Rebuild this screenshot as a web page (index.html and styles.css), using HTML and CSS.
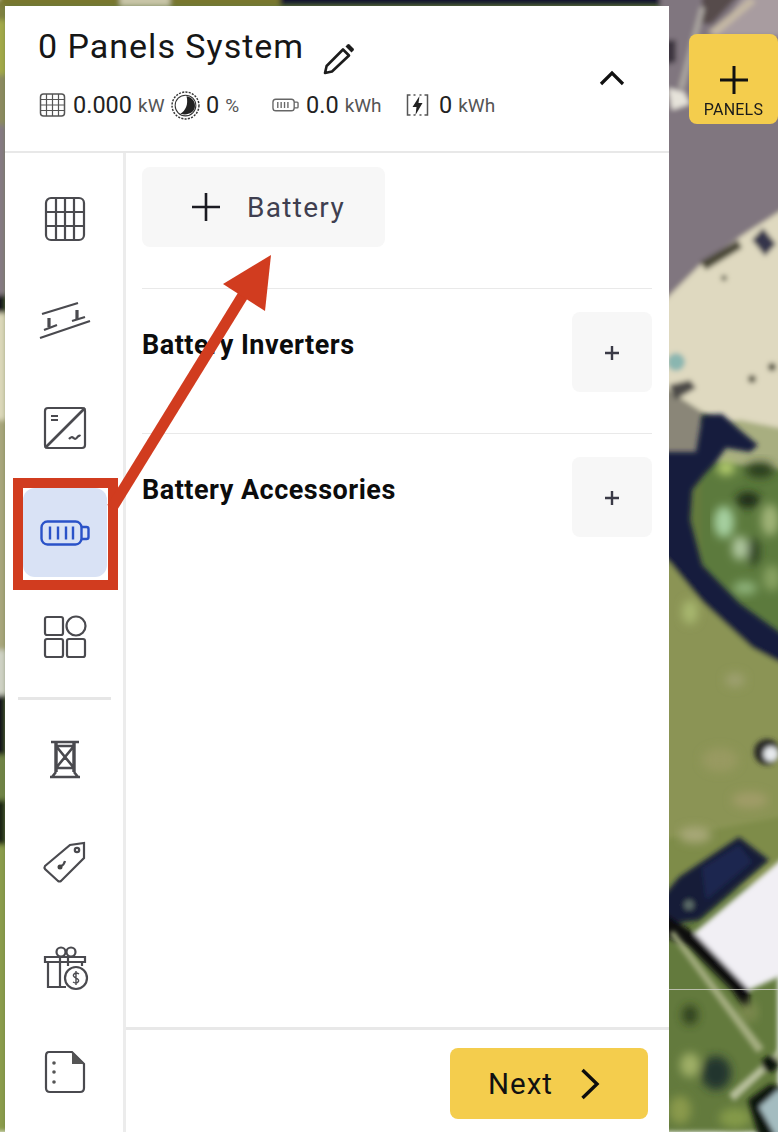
FILE: index.html
```html
<!DOCTYPE html>
<html lang="en">
<head>
<meta charset="utf-8">
<title>0 Panels System</title>
<link rel="stylesheet" href="styles.css">
</head>
<body>
<div class="stage">
  <svg class="map" viewBox="0 0 778 1132" preserveAspectRatio="none" aria-hidden="true">
    <defs>
      <filter id="soft" x="-5%" y="-5%" width="110%" height="110%"><feGaussianBlur stdDeviation="2.600"/></filter>
      <filter id="softer" x="-5%" y="-5%" width="110%" height="110%"><feGaussianBlur stdDeviation="5"/></filter>
    </defs>
    <g filter="url(#soft)">
      <rect width="778" height="1132" fill="#647a3c"/>
      <rect x="-10" y="0" width="16" height="20" fill="#7f8040"/>
      <rect x="-10" y="20" width="16" height="55" fill="#a3a94a"/>
      <rect x="-10" y="75" width="16" height="50" fill="#8c8a60"/>
      <rect x="-10" y="125" width="16" height="170" fill="#857a82"/>
      <rect x="-10" y="295" width="16" height="18" fill="#15131c"/>
      <rect x="-10" y="313" width="16" height="107" fill="#dcd8ba"/>
      <rect x="-10" y="420" width="16" height="230" fill="#a8a67c"/>
      <rect x="-10" y="650" width="16" height="45" fill="#cfd2c4"/>
      <rect x="-10" y="695" width="16" height="60" fill="#15181c"/>
      <rect x="-10" y="755" width="16" height="45" fill="#6f8345"/>
      <rect x="-10" y="800" width="16" height="45" fill="#1c2612"/>
      <rect x="-10" y="845" width="16" height="287" fill="#8b9c4c"/>
      <rect x="0" y="-6" width="360" height="12" fill="#79772f"/>
      <rect x="120" y="-6" width="50" height="12" fill="#c9c6a8"/>
      <rect x="280" y="-6" width="400" height="12" fill="#14172e"/>

      <rect x="660" y="-6" width="128" height="330" fill="#80767f"/>
      <polygon points="702,-6 740,-6 712,24 702,24" fill="#564b4c"/>
      <polygon points="745,-6 790,-6 790,36 715,36" fill="#a89ca0"/>
      <polygon points="708,32 750,-2 756,2 716,36" fill="#c4b8a4"/>
      <polygon points="700,6 705,8 684,90 678,88" fill="#aaa5a0"/>
      <polygon points="668,88 684,92 690,104 672,110" fill="#e6e3da"/>
      <polygon points="660,40 676,40 676,62 660,66" fill="#3c3640"/>
      <polygon points="660,305 702,263 746,233 790,205 790,445 740,430 702,412 660,385" fill="#dfd9c0"/>
      <polygon points="700,262 738,240 742,248 706,270" fill="#4c4a38"/>
      <polygon points="752,240 763,228 776,244 765,256" fill="#35344c"/>
      <circle cx="724" cy="278" r="3" fill="#6b6a56"/>
      <circle cx="676" cy="362" r="9" fill="#8ab6b0"/>
      <circle cx="772" cy="367" r="4" fill="#4b4a38"/>
      <circle cx="752" cy="379" r="4" fill="#5b5a48"/>
      <polygon points="660,385 702,412 702,460 660,460" fill="#8a8678"/>
      <polygon points="669,385 690,380 696,388 675,400" fill="#4e4c48"/>
      <rect x="702" y="430" width="88" height="210" fill="#5c7a3e"/>
      <polygon points="790,430 740,420 702,425 702,460 790,470" fill="#a8ae80"/>
    </g>
    <g filter="url(#softer)">
      <ellipse cx="726" cy="468" rx="9" ry="7" fill="#b8d070"/>
      <ellipse cx="748" cy="500" rx="12" ry="8" fill="#1e2c14"/>
      <ellipse cx="724" cy="522" rx="10" ry="16" fill="#a6d0a0"/>
      <ellipse cx="740" cy="548" rx="8" ry="12" fill="#b0c8a0"/>
      <ellipse cx="760" cy="470" rx="14" ry="8" fill="#2c3c1c"/>
      <ellipse cx="770" cy="520" rx="9" ry="16" fill="#a0b478"/>
      <ellipse cx="754" cy="552" rx="6" ry="14" fill="#2e4220"/>
      <ellipse cx="772" cy="578" rx="9" ry="13" fill="#86a060"/>
      <ellipse cx="745" cy="588" rx="12" ry="7" fill="#8cb078"/>
    </g>
    <g filter="url(#soft)">
      <polygon points="660,452 696,452 702,415 722,414 740,430 758,445 750,452 726,448 716,462 704,475 692,490 690,520 702,565 739,603 790,640 790,668 752,648 702,602 669,562 660,556" fill="#151a3c"/>
      <polygon points="660,556 669,562 702,602 752,648 790,668 790,840 660,880" fill="#8b9455"/>
      <polygon points="660,840 790,815 790,880 660,900" fill="#7e8c48"/>
    </g>
    <g filter="url(#softer)">
      <ellipse cx="690" cy="612" rx="8" ry="12" fill="#a8b870"/>
      <ellipse cx="735" cy="680" rx="10" ry="7" fill="#9ea070"/>
      <ellipse cx="720" cy="760" rx="18" ry="12" fill="#989a60"/>
      <ellipse cx="695" cy="835" rx="16" ry="8" fill="#a8a878"/>
      <ellipse cx="750" cy="800" rx="18" ry="8" fill="#a09c68"/>
    </g>
    <g filter="url(#soft)">
      <circle cx="767" cy="752" r="13" fill="#2a2c26"/>
      <circle cx="771" cy="754" r="7.500" fill="#e6e9ec"/>
      <polygon points="679,877 739,837 769,860 699,920 660,925 660,900" fill="#141a38"/>
      <polygon points="702,868 739,845 752,862 706,900" fill="#1c2850"/>
      <circle cx="689" cy="905" r="5" fill="#5c6c68"/>
      <polygon points="660,910 694,933 749,985 750,1017 732,990 689,947 660,935" fill="#0b0c10"/>
      <polygon points="694,933 790,852 790,972 749,990" fill="#f1eff4"/>
    </g>
    <g filter="url(#softer)">
      <ellipse cx="690" cy="1015" rx="8" ry="10" fill="#2e401a"/>
      <ellipse cx="690" cy="1065" rx="10" ry="12" fill="#a0b068"/>
      <ellipse cx="748" cy="1012" rx="10" ry="10" fill="#7e8c50"/>
      <ellipse cx="680" cy="1110" rx="11" ry="14" fill="#8a9a4c"/>
      <ellipse cx="735" cy="1118" rx="16" ry="10" fill="#849a48"/>
      <ellipse cx="716" cy="1073" rx="15" ry="17" fill="#22362f"/>
    </g>
    <g filter="url(#soft)">
      <polygon points="669,933 674,931 764,1048 757,1053" fill="#a4ad80"/>
      <polygon points="729,1094 790,1040 790,1049 734,1101" fill="#b8c09c"/>
      <circle cx="770" cy="1064" r="8" fill="#0e1210"/>
      <polygon points="748,1100 770,1084 790,1090 790,1140 760,1140" fill="#101410"/>
      <polygon points="778,1090 759,1107 778,1140 790,1140 790,1090" fill="#a4bcc0"/>
    </g>
    <rect x="669" y="989" width="109" height="1" fill="#cfcfc8" opacity=".8"/>
  </svg>

  <section class="panel">
    <header class="head">
      <div class="head-main">
        <div class="title-row">
          <h1 class="title">0 Panels System</h1>
          <svg class="pencil" viewBox="0 0 34 34" aria-hidden="true"><path d="M3 31l1.600-7L21 7.500 27 13.500 10 29.500z" fill="none" stroke="#1c1c1c" stroke-width="2.600" stroke-linejoin="round"/><path d="M23.500 4.500l2-2q1-1 2 0l4 4q1 1 0 2l-2 2z" fill="#1c1c1c"/></svg>
        </div>
        <div class="stats">
          <div class="stat stat-a">
            <svg class="stat-icon" viewBox="0 0 26 24" aria-hidden="true"><rect x="1" y="1" width="24" height="22" rx="3" fill="none" stroke="#555" stroke-width="1.500"/><path d="M1 6.500H25M1 12H25M1 17.500H25M7 1V23M13 1V23M19 1V23" stroke="#555" stroke-width="1.200"/></svg>
            <span class="val">0.000</span><span class="unit">kW</span>
          </div>
          <div class="stat stat-b">
            <svg class="stat-icon stat-icon-pie" viewBox="0 0 28 28" aria-hidden="true"><circle cx="14" cy="14" r="13" fill="none" stroke="#333" stroke-width="1.400" stroke-dasharray="2 1.200"/><circle cx="14" cy="14" r="10" fill="none" stroke="#333" stroke-width="1"/><path d="M15 5C21 6 24 11 23 16 22 21 16 24 9 22 14 19 17 13 15 5z" fill="#222"/></svg>
            <span class="val">0</span><span class="unit">%</span>
          </div>
          <div class="stat stat-c">
            <svg class="stat-icon" viewBox="0 0 28 16" aria-hidden="true"><rect x="1" y="2" width="22" height="12" rx="3" fill="none" stroke="#666" stroke-width="1.400"/><path d="M23 5h3q1 0 1 1v4q0 1-1 1h-3" fill="none" stroke="#666" stroke-width="1.400"/><path d="M6 5v6M9.500 5v6M13 5v6M16.500 5v6" stroke="#666" stroke-width="1.400"/></svg>
            <span class="val">0.0</span><span class="unit">kWh</span>
          </div>
          <div class="stat">
            <svg class="stat-icon stat-icon-bolt" viewBox="0 0 24 24" aria-hidden="true"><path d="M5 2H2v20h3M19 2h3v20h-3M8 2h2M14 2h2M8 22h2M14 22h2" fill="none" stroke="#555" stroke-width="1.500"/><path d="M14 3L7 14h4l-1 8 7-12h-4z" fill="#222"/></svg>
            <span class="val">0</span><span class="unit">kWh</span>
          </div>
        </div>
      </div>
      <svg class="caret" viewBox="0 0 26 16" aria-hidden="true"><path d="M2 14L13 3l11 11" fill="none" stroke="#111" stroke-width="3.200"/></svg>
    </header>

    <div class="body">
      <nav class="rail">
        <div class="rail-item">
          <svg class="rail-icon" viewBox="0 0 44 44" aria-hidden="true"><rect x="3" y="1" width="38" height="42" rx="5" class="ln"/><path d="M13 1V43M22 1V43M31 1V43M3 15H41M3 29H41" class="ln"/></svg>
        </div>
        <div class="rail-item">
          <svg class="rail-icon rail-icon-mount" viewBox="0 0 54 40" aria-hidden="true"><path d="M4 11L40 0M2 35L52 18M6 27L19 22M34 18L47 14" class="ln"/><path d="M11 15V24M39 7V16" class="ln ln-heavy"/></svg>
        </div>
        <div class="rail-item">
          <svg class="rail-icon" viewBox="0 0 44 44" aria-hidden="true"><rect x="2" y="2" width="40" height="40" rx="3" class="ln"/><path d="M2 42L42 2" class="ln ln-mid"/><path d="M8 10h7M8 14h7M26 33q2.500-3 4.500-1t4-1q1.500-2 3-1" class="ln"/></svg>
        </div>
        <div class="rail-item rail-item-active">
          <svg class="rail-icon-batt" viewBox="0 0 50 26" aria-hidden="true"><rect x="1.500" y="1.500" width="40" height="23" rx="6" class="ln-blue"/><path d="M41.500 7h5q2 0 2 2v8q0 2-2 2h-5" class="ln-blue"/><path d="M10 6.500v13M18 6.500v13M26 6.500v13M33 6.500v13" class="ln-blue"/></svg>
        </div>
        <div class="rail-item">
          <svg class="rail-icon" viewBox="0 0 44 44" aria-hidden="true"><rect x="2" y="2" width="18" height="18" rx="2" class="ln"/><circle cx="33" cy="11" r="9.500" class="ln"/><rect x="2" y="24" width="18" height="18" rx="2" class="ln"/><rect x="24" y="24" width="18" height="18" rx="2" class="ln"/></svg>
        </div>
        <div class="rail-rule"></div>
        <div class="rail-item">
          <svg class="rail-icon" viewBox="0 1 44 44" aria-hidden="true"><path d="M8 5H36M13 5V35M31 5V35M13 9H31M13 31H31M13 9L31 31M31 9L13 31M13 35L9 40M31 35L35 40M7 40H37" class="ln ln-mid"/><path d="M13 5V35M31 5V35" class="ln ln-heavy"/></svg>
        </div>
        <div class="rail-item">
          <svg class="rail-icon" viewBox="0 3 44 44" aria-hidden="true"><path d="M2 26L27 5 41 3 41 18 18 41q-1.500 1-3 0L2 29q-1-1.500 0-3z" class="ln"/><circle cx="34" cy="10" r="2.200" class="ln"/><path d="M22 21q-1 4-4 5" class="ln"/><circle cx="17" cy="27" r="2.500" fill="#444"/></svg>
        </div>
        <div class="rail-item">
          <svg class="rail-icon" viewBox="-1 1 44 44" aria-hidden="true"><path d="M1 11H41V16H1zM4 16V41H22M38 16V20M16 11V41M24 11V20" class="ln"/><circle cx="17" cy="6" r="4.500" class="ln"/><circle cx="27" cy="6" r="4.500" class="ln"/><circle cx="32" cy="32" r="11" class="ln"/><path d="M35 28q-3-2-5 0t2 4 2 4-5 0M32 25v14" class="ln ln-thin"/></svg>
        </div>
        <div class="rail-item">
          <svg class="rail-icon" viewBox="0 2 44 44" aria-hidden="true"><path d="M6 2H29L41 14V38q0 4-4 4H7q-4 0-4-4V6q0-4 3-4z" class="ln"/><path d="M29 2L41 14H29z" fill="#555"/><circle cx="11" cy="13" r="1.800" fill="#555"/><circle cx="11" cy="22" r="1.800" fill="#555"/><circle cx="11" cy="32" r="1.800" fill="#555"/></svg>
        </div>
      </nav>

      <div class="main">
        <div class="content">
          <div class="add-wrap">
            <button class="add-main" type="button">
              <svg class="plus-lg" viewBox="0 0 28 28" aria-hidden="true"><path d="M14 0V28M0 14H28" stroke="#1b1b22" stroke-width="2.600"/></svg>
              <span>Battery</span>
            </button>
          </div>
          <div class="section">
            <h2 class="section-title">Battery Inverters</h2>
            <button class="add-small" type="button"><svg class="plus-sm" viewBox="0 0 14 14" aria-hidden="true"><path d="M7 0V14M0 7H14" stroke="#3a3a46" stroke-width="2.400"/></svg></button>
          </div>
          <div class="section">
            <h2 class="section-title">Battery Accessories</h2>
            <button class="add-small" type="button"><svg class="plus-sm" viewBox="0 0 14 14" aria-hidden="true"><path d="M7 0V14M0 7H14" stroke="#3a3a46" stroke-width="2.400"/></svg></button>
          </div>
        </div>
        <footer class="foot">
          <button class="next" type="button"><span>Next</span><svg class="next-icon" viewBox="0 0 20 32" aria-hidden="true"><path d="M2.500 2L17 16 2.500 30" fill="none" stroke="#0d0d0d" stroke-width="3.400"/></svg></button>
        </footer>
      </div>
    </div>
  </section>

  <button class="fab" type="button">
    <svg class="fab-plus" viewBox="0 0 28 28" aria-hidden="true"><path d="M14 0V28M0 14H28" stroke="#111" stroke-width="3"/></svg>
    <span>PANELS</span>
  </button>

  <div class="callout-box"></div>
  <svg class="callout-arrow" viewBox="0 0 778 1132" aria-hidden="true"><path d="M112 508L245 292" stroke="#d13c1f" stroke-width="11" fill="none"/><polygon points="271,255 223,284 265,311" fill="#d13c1f"/></svg>
</div>
</body>
</html>
```

FILE: styles.css
```css
* { box-sizing: border-box; }
html, body { margin: 0; padding: 0; height: 100%; overflow: hidden; }
body { font-family: Roboto, "Liberation Sans", sans-serif; background: #fff; color: #111; }
button { font: inherit; border: 0; padding: 0; cursor: pointer; }

.stage { position: relative; width: 778px; height: 1132px; overflow: hidden; filter: blur(0.6px); }
.map { position: absolute; inset: 0; width: 778px; height: 1132px; display: block; }

.panel {
  position: absolute; left: 5px; top: 6px; width: 664px; height: 1126px;
  background: #fff; display: flex; flex-direction: column;
}

.head {
  height: 147px; flex: none; display: flex; padding: 21px 44px 0 33px;
  justify-content: space-between; border-bottom: 2px solid #e8e8e8;
}
.title-row { display: flex; align-items: flex-start; }
.title { margin: 0; font-size: 34px; line-height: 38px; font-weight: 400; letter-spacing: 1px; color: #161616; }
.pencil { width: 34px; height: 34px; margin: 15px 0 0 18px; }
.stats { display: flex; align-items: center; margin-top: 14px; height: 30px; padding-left: 1px; }
.stat { display: flex; align-items: center; }
.stat-a { width: 132px; }
.stat-b { width: 101px; }
.stat-c { width: 132px; }
.stat-icon { width: 27px; height: 24px; margin-right: 7px; flex: none; }
.stat-icon-pie { width: 29px; height: 29px; margin-right: 6px; }
.stat-icon-bolt { margin-right: 8px; }
.val { font-size: 23.500px; color: #222; }
.unit { font-size: 19px; color: #555; margin-left: 6px; }
.caret { width: 26px; height: 16px; margin-top: 43px; flex: none; }

.body { flex: 1; min-height: 0; display: flex; }
.rail {
  width: 121px; flex: none; border-right: 3px solid #ececec;
  display: flex; flex-direction: column; align-items: center; padding: 21px 0 0 1px;
}
.rail-item { width: 84px; height: 89px; flex: none; margin-bottom: 15.700px; display: flex; align-items: center; justify-content: center; border-radius: 12px; }
.rail-item-active { background: #d9e2f5; }
.rail-icon { width: 44px; height: 44px; overflow: visible; }
.rail-icon-mount { width: 54px; height: 40px; }
.rail-icon-batt { width: 50px; height: 26px; overflow: visible; }
.rail-rule { width: 93px; height: 3px; flex: none; background: #e6e6e6; margin: 0 0 15px; }
.ln { fill: none; stroke: #4a4a4f; stroke-width: 2.200; }
.ln-heavy { stroke-width: 3.200; }
.ln-mid { stroke-width: 2.600; }
.ln-thin { stroke-width: 1.400; }
.ln-blue { fill: none; stroke: #2a52c8; stroke-width: 2.400; }

.main { flex: 1; min-width: 0; display: flex; flex-direction: column; }
.content { flex: 1; min-height: 0; padding: 0 17px 0 16px; }
.add-wrap { height: 135px; padding-top: 14px; }
.add-main {
  width: 243px; height: 80px; border-radius: 8px; background: #f7f7f7;
  display: flex; align-items: center; gap: 27px; padding-left: 50px;
  font-size: 28px; letter-spacing: 1.3px; color: #3f3f50;
}
.plus-lg { width: 28px; height: 28px; flex: none; }
.section { height: 145px; border-top: 1.500px solid #e9e9e9; display: flex; justify-content: space-between; padding-top: 23px; }
.section-title { margin: 0; padding-top: 18px; font-size: 27px; line-height: 30px; font-weight: 700; letter-spacing: 0.5px; color: #0c0c0c; }
.add-small { width: 80px; height: 80px; border-radius: 8px; background: #f7f7f7; display: flex; align-items: center; justify-content: center; padding-top: 2px; }
.plus-sm { width: 14px; height: 14px; }

.foot { height: 105px; flex: none; border-top: 3px solid #e8e8e8; display: flex; justify-content: flex-end; padding: 18px 21px 0 0; }
.next {
  width: 198px; height: 71px; border-radius: 8px; background: #f4cd4d;
  display: flex; align-items: center; justify-content: center; gap: 27px; padding-right: 10px;
  font-size: 29.500px; letter-spacing: 1px; color: #111;
}
.next-icon { width: 20px; height: 32px; }

.fab {
  position: absolute; left: 689px; top: 34px; width: 89px; height: 90px; border-radius: 8px;
  background: #f4cd4d; display: flex; flex-direction: column; align-items: center;
  font-size: 16px; color: #1a1a1a; padding-top: 32px; letter-spacing: 0.2px;
}
.fab-plus { width: 28px; height: 28px; flex: none; margin-bottom: 6px; }

.callout-box { position: absolute; left: 13px; top: 478px; width: 105px; height: 112px; border: 10.500px solid #d13c1f; }
.callout-arrow { position: absolute; inset: 0; width: 778px; height: 1132px; pointer-events: none; }
```
